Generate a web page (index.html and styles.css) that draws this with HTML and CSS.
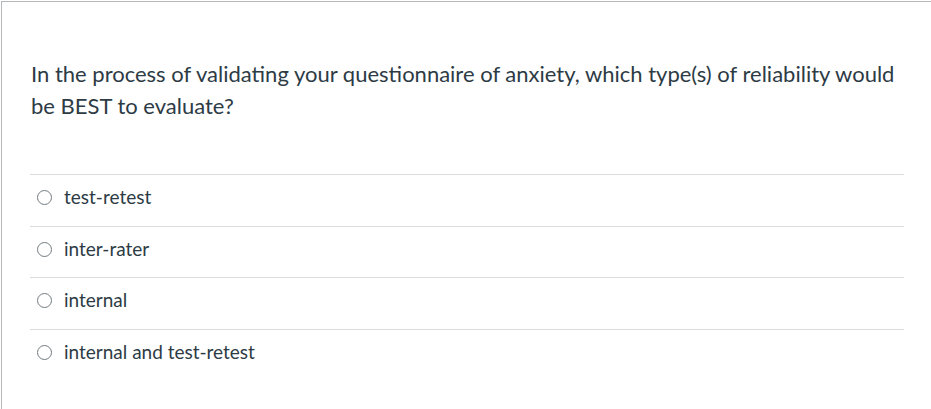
FILE: index.html
```html
<!DOCTYPE html>
<html>
<head>
<meta charset="utf-8">
<link rel="stylesheet" href="styles.css">
</head>
<body>
<div class="frame">
  <div class="question">
    <p class="text">In the process of validating your questionnaire of anxiety, which type(s) of reliability would be BEST to evaluate?</p>
    <div class="answers">
      <label class="answer"><span class="radio"></span><span class="label">test-retest</span></label>
      <label class="answer"><span class="radio"></span><span class="label">inter-rater</span></label>
      <label class="answer"><span class="radio"></span><span class="label">internal</span></label>
      <label class="answer"><span class="radio"></span><span class="label">internal and test-retest</span></label>
    </div>
  </div>
</div>
</body>
</html>
```

FILE: styles.css
```css
html, body {
  margin: 0;
  padding: 0;
  background: #ffffff;
}
body {
  font-family: Lato, "Liberation Sans", sans-serif;
  color: #2d3b45;
}
.frame {
  margin: 1px 0 0 1px;
  border-top: 1px solid #b4b8bb;
  border-left: 1px solid #b4b8bb;
  height: 420px;
}
.question {
  padding: 0 27px 0 28px;
}
.text {
  margin: 0;
  padding: 56px 0 0 1px;
  font-size: 22px;
  line-height: 32px;
  height: 116px;
}
.answers {
  display: flex;
  flex-direction: column;
}
.answer {
  display: flex;
  align-items: center;
  height: 52px;
  border-top: 1px solid #dadcde;
  box-sizing: border-box;
  padding-left: 7px;
  padding-bottom: 8px;
}
.answer:nth-child(2) {
  height: 51px;
}
.radio {
  width: 13px;
  height: 13px;
  border: 1px solid #737b80;
  border-radius: 50%;
  flex: none;
  margin-top: 2px;
}
.label {
  margin-left: 12px;
  font-size: 19px;
}
```
